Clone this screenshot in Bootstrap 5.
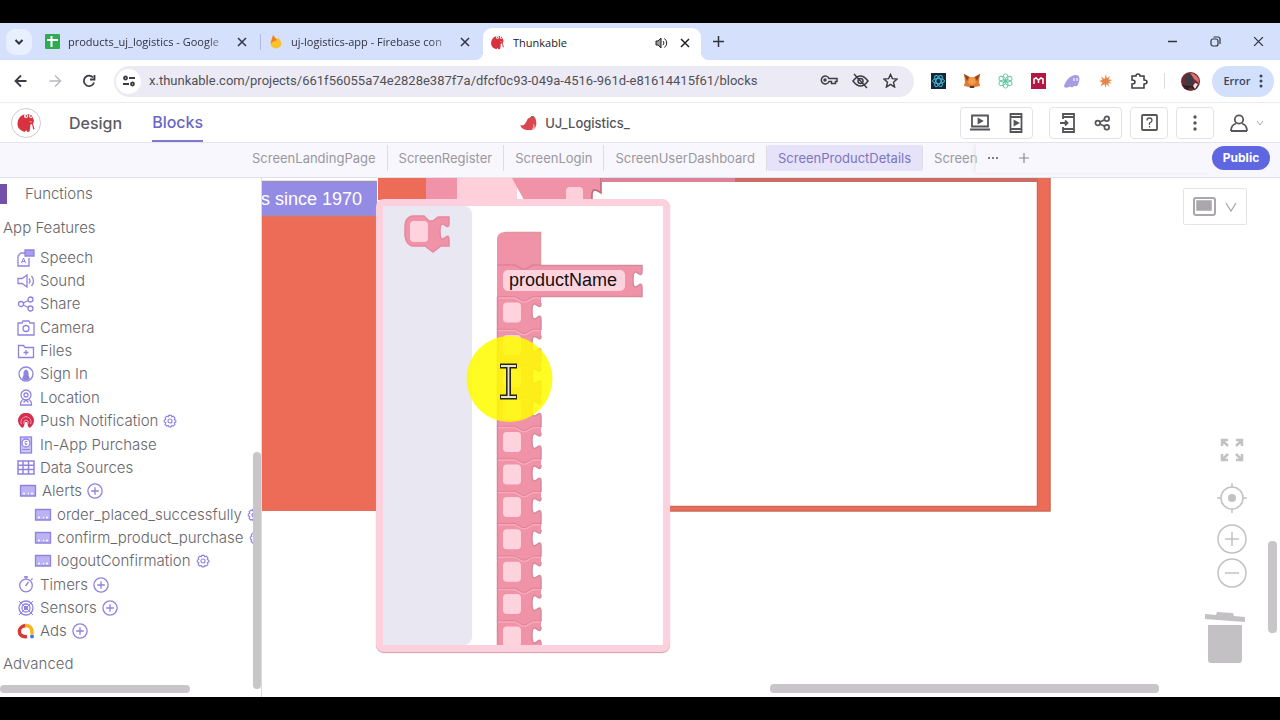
<!DOCTYPE html>
<html lang="en">
<head>
<meta charset="utf-8">
<meta name="viewport" content="width=device-width, initial-scale=1">
<title>Thunkable</title>
<link rel="stylesheet" href="https://cdn.jsdelivr.net/npm/bootstrap@5.3.0/dist/css/bootstrap.min.css">
<style>
:root{--violet:#8f83e0;--ink:#55555a}
body{font-family:Inter,"Liberation Sans",sans-serif;background:#000;padding:23px 0;overflow:hidden;fill:none;stroke:currentColor;stroke-width:1.5px}
button{background:none;border:0;padding:0;color:inherit;line-height:1}
svg{display:block;flex-shrink:0}
.tabstrip{height:37px;background:#d5e0fc;font:11px/16px "Open Sans",sans-serif;color:#303340}
.tabsearch{width:26px;height:26px;border-radius:9px;background:#e8effe;margin:0 6px}
.btab{width:222px;height:32px;padding:0 13px 0 7px}
.btab .ttl{overflow:hidden;white-space:nowrap;color:inherit;text-decoration:none}
.btab.fade-end .ttl{-webkit-mask-image:linear-gradient(90deg,#000 88%,rgba(0,0,0,.3))}
.btab.on{width:218px;padding:0 11px 3px 7px;background:#fff;border-radius:9px 9px 0 0;align-self:end;position:relative;color:#202124}
.btab.on::before,.btab.on::after{content:"";position:absolute;bottom:0;width:8px;height:8px}
.btab.on::before{left:-8px;background:radial-gradient(circle at 0 0,transparent 8px,#fff 8px)}
.btab.on::after{right:-8px;background:radial-gradient(circle at 100% 0,transparent 8px,#fff 8px)}
.wincontrols{gap:32px;padding-right:16px}
.vline{width:1px;height:16px;background:#aebbdc}
.toolbar{height:43px;background:#fff;border-bottom:1px solid #ececf0;color:#3c3d42}
.navbtns{gap:20px;padding:0 18px 0 14px}
.dim{color:#b9b9bf}
.omni{height:31px;border-radius:16px;background:#ecebf5;padding:0 16px 0 2px}
.omni input{font:13px/18px Roboto,"Open Sans",sans-serif;color:#505058;background:none;border:0;padding:0;outline:0}
.omni .acts{gap:14px}
.siteinfo{width:25px;height:25px;border-radius:50%;background:#fff}
.exts{gap:16px;padding:0 12px 0 16px}
.exts .vline{background:#dcdbe2}
.errpill{height:31px;width:62px;margin-right:6px;border-radius:16px;background:#d3e0fc;font:600 11px/16px "Open Sans",sans-serif;color:#3a4460}
.apphead{height:39px;background:#fff;color:var(--ink)}
.logo{width:30px;height:30px;border:1px solid #cfcbd2;border-radius:50%;margin-left:11px}
.modes{gap:30px;margin-left:28px}
.modes a{font-size:16px;font-weight:500;line-height:20px;color:#5c5c60;text-decoration:none;height:39px;padding-top:10px}
.modes a.on{color:#6a66c9;border-bottom:2px solid #8078cc;padding-top:9px}
.proj{font-size:13px;line-height:18px;font-weight:500;color:#55555a;margin-left:-65px}
.tools{height:32px;border:1px solid #e3e2e6;border-radius:4px}
.w-one{width:38px}.w-two{width:73px}
.screens{height:36px;padding-bottom:4px;background:#f8f7fd;border-top:1px solid #e6e5eb;border-bottom:1px solid #e3e2e8}
.scr{height:26px;padding:0 11px;border-right:1px solid #dedde4;font-size:13px;line-height:26px;color:#98989f;text-decoration:none;white-space:nowrap}
.scr.on{background:#e6e2fa;color:#7a76bf;border-radius:3px}
.scrwrap{margin-left:241px;width:735px}
.scrmore{box-shadow:-3px 0 5px -2px #e3e2ea;color:#8a8a91;height:30px;padding-left:11px}
.pub{background:#5e66e2;color:#fff;border-radius:12px;height:24px;width:58px;margin-right:10px;font-size:12px;font-weight:700}
.stage{background:#fff;min-height:0}
.side{width:262px;border-right:1px solid #dcdbe2;font-size:15px;font-weight:300;color:#66666c;stroke-width:1.3px}
.side a{color:inherit;text-decoration:none;line-height:20px}
.side .fn{height:31px;padding-left:25px}
.side .hd{height:37px;padding-left:3px}
.side .adv{height:42px}
.side .row-f{flex:1;padding-left:17px;gap:5px}
.side .grp{padding-left:19px}
.side .sub{padding-left:34px}
.side svg{color:var(--violet)}
.fnmark{left:0;top:6px;width:7px;height:20px;background:#7550a8}
.bar{background:#c8c6c9;border-radius:4px}
.sidev{right:0;bottom:8px;width:8px;height:237px}
.sideh{width:190px;height:8px}
.work{overflow:hidden}
.canvas-svg{position:absolute;left:0;top:0;stroke:none}
.pop{position:absolute;left:114px;top:21px;width:294px;height:453px;border:7px solid #fcd0dc;border-radius:8px;background:#fff;box-shadow:0 1px 1px #d998a8;overflow:hidden}
.drawer{width:89px;height:100%;background:#e9e7f2;border-radius:0 8px 8px 0}
.pop svg{stroke:none}
.fieldname{position:absolute;left:120px;top:64px;width:122px;height:21px;border:0;border-radius:5px;background:#ffd3dd;font:18px/20px "Liberation Sans",Arial,sans-serif;color:#111;padding:0 6px;outline:0}
.halo{position:absolute;left:204px;top:158px}
.picker{position:absolute;right:33px;top:10px;width:64px;height:37px;border:1px solid #e4e3e6;border-radius:2px;color:#a9a7ab}
.ctl{position:absolute;right:28px;bottom:33px;width:40px;color:#c3c1c4}
.ctl .c1{margin-top:21px}.ctl .c2{margin-top:11px}.ctl .bin{margin:22px 14px 0 0}
.vbar{right:3px;top:363px;width:9px;height:92px}
.hbar{left:508px;bottom:4px;width:389px;height:9px}
</style>
<script src="https://cdn.jsdelivr.net/npm/bootstrap@5.3.0/dist/js/bootstrap.bundle.min.js"></script>
</head>
<body class="vh-100 d-flex flex-column">
<svg width="0" height="0" class="position-absolute">
<symbol id="x" viewBox="0 0 10 10"><path d="M1 1l8 8M9 1L1 9"/></symbol>
<symbol id="gear" viewBox="0 0 16 16"><path d="M6.500 1.500h3l.6 1.700 1.800-.6 1.800 2-.8 1.600 1.700 1v2l-1.700.9.7 1.800-2 1.900-1.600-.7-1 1.600h-2l-1-1.700-1.700.7-1.900-1.900.8-1.700-1.700-1v-2l1.700-1-.7-1.700 1.900-1.900 1.600.6z"/><circle cx="8" cy="8" r="2.300"/></symbol>
<symbol id="plus" viewBox="0 0 16 16"><circle cx="8" cy="8" r="7.100"/><path d="M8 4.200v7.600M4.200 8h7.600"/></symbol>
<symbol id="alert" viewBox="0 0 18 14"><path d="M1.500 1.500h15v10.500h-15z" fill="#bcb4f2"/><path d="M4 9.500h2M9 9.500h1M12 9.500h2" stroke="#fff"/></symbol>
<symbol id="dino" viewBox="0 0 20 20"><g stroke="none"><path d="M4.500 3.500C7 1 14 .5 16.500 3l1.500 5-1 3 1.500 5-2 1-2-4-1 5.500-2.500.5-.5-2-2 2-3-1.500C.5 15 .2 8 4.500 3.500z" fill="#d8313f"/><path d="M14 12l2-1 1.500 7h-2z" fill="#fff"/><circle cx="10" cy="3" r="2" fill="#fff"/><circle cx="15" cy="3" r="2" fill="#fff"/><circle cx="10.300" cy="3" r=".8" fill="#222"/><circle cx="15" cy="3" r=".8" fill="#222"/><path d="M13 8l3 .5-1 1.500z" fill="#f5a34a"/></g></symbol>
<symbol id="share" viewBox="0 0 18 16"><circle cx="4" cy="8" r="2.500"/><circle cx="13.500" cy="3.500" r="2.500"/><circle cx="13.500" cy="12.500" r="2.500"/><path d="M6.300 7l5-2.500M6.300 9l5 2.500"/></symbol>
<symbol id="blk" viewBox="0 0 46 40" overflow="visible"><path d="M0 0H44V6c0 11-9-9-9 8.500s9-3 9 8.500V33H0z" fill="#f193a8"/><path d="M44 6c0 11-9-9-9 8.500s9-3 9 8.500V33M.5 33V0" fill="none" stroke="#d58a9c"/><path d="M0 0H18l7 4h4l7-4h8" stroke="#dc8297" fill="none"/><path d="M1 1H18l7 4h4l7-4h7" stroke="#f7a9ba" fill="none"/><rect x="6" y="5.500" width="18" height="20" rx="4" fill="#ffd3dd"/></symbol>
</svg>

<header>
<div class="tabstrip d-flex align-items-center">
 <button class="tabsearch d-flex align-items-center justify-content-center" aria-label="Search tabs"><svg width="10" height="10" viewBox="0 0 10 10" stroke-width="2"><path d="M1.500 3L5 6.500 8.500 3"/></svg></button>
 <div class="btab fade-end d-flex align-items-center gap-2"><svg width="15" height="15" viewBox="0 0 15 15"><rect width="15" height="15" rx="1" fill="#2fab50" stroke="none"/><path d="M2 6h11M6.500 2v11" stroke="#fff" stroke-width="2"/></svg><a href="#" class="ttl flex-grow-1">products_uj_logistics - Google</a><button class="ms-1" aria-label="Close"><svg width="10" height="10"><use href="#x"/></svg></button></div>
 <div class="vline"></div>
 <div class="btab fade-end d-flex align-items-center gap-2"><svg width="15" height="15" viewBox="0 0 15 15" stroke="none"><ellipse cx="8" cy="9.500" rx="5.500" ry="5" fill="#fdc02f"/><path d="M9 5l2-1 2 5z" fill="#fdc02f"/><path d="M2.500 9L5 1l4 5z" fill="#f2801e"/></svg><a href="#" class="ttl flex-grow-1">uj-logistics-app - Firebase con</a><button class="ms-1" aria-label="Close"><svg width="10" height="10"><use href="#x"/></svg></button></div>
 <div class="btab on d-flex align-items-center gap-2"><svg width="15" height="15"><use href="#dino"/></svg><a href="#" class="ttl flex-grow-1">Thunkable</a><button aria-label="Mute tab"><svg width="13" height="12" viewBox="0 0 13 12" stroke-width="1"><path d="M1 4h2l3-3v10L3 8H1z" fill="#999"/><path d="M8 4q2 2 0 4M9.500 1.500q4.500 4.500 0 9"/></svg></button><button class="ms-1" aria-label="Close"><svg width="10" height="10"><use href="#x"/></svg></button></div>
 <button class="ms-1 px-2" aria-label="New tab"><svg width="11" height="11" viewBox="0 0 11 11"><path d="M5.500 0v11M0 5.500h11"/></svg></button>
 <div class="wincontrols ms-auto d-flex align-items-center"><button aria-label="Minimise"><svg width="11" height="11" viewBox="0 0 11 11"><path d="M1 5.500h9"/></svg></button><button aria-label="Restore"><svg width="11" height="11" viewBox="0 0 11 11" stroke-width="1.200"><rect x="1" y="3" width="7" height="7" rx="2"/><path d="M3.500 1H8q2 0 2 2v5"/></svg></button><button aria-label="Close window"><svg width="11" height="11" stroke-width="1.200"><use href="#x"/></svg></button></div>
</div>
<div class="toolbar d-flex align-items-center">
 <div class="navbtns d-flex"><button aria-label="Back"><svg width="14" height="14" viewBox="0 0 14 14" stroke-width="1.800"><path d="M12.500 7h-11M7 1.500L1.500 7 7 12.500"/></svg></button><button class="dim" aria-label="Forward"><svg width="14" height="14" viewBox="0 0 14 14"><path d="M1.500 7h11M7 1.500L12.500 7 7 12.500"/></svg></button><button aria-label="Reload"><svg width="14" height="14" viewBox="0 0 14 14" stroke-width="1.800"><path d="M12 8.500A5.200 5.200 0 1 1 11 3.500M12.500 1v4.500H8"/></svg></button></div>
 <div class="omni d-flex align-items-center flex-grow-1">
  <button class="siteinfo d-flex align-items-center justify-content-center" aria-label="Site information"><svg width="12" height="12" viewBox="0 0 12 12" stroke-width="1.800"><circle cx="2.500" cy="3" r="1.500"/><path d="M6 3h6M0 9h6"/><circle cx="9.500" cy="9" r="1.500"/></svg></button>
  <input class="flex-grow-1 ms-2" aria-label="Address" value="x.thunkable.com/projects/661f56055a74e2828e387f7a/dfcf0c93-049a-4516-961d-e81614415f61/blocks">
  <div class="acts d-flex"><svg width="18" height="14" viewBox="0 0 18 14"><path d="M9 5.500A4 4 0 1 0 9 8.500h2.500v2h4v-2H17v-3z"/><circle cx="5" cy="7" r="1"/></svg><svg width="17" height="16" viewBox="0 0 17 16"><path d="M1 8q7.500-10 15 0-7.500 10-15 0zM2 1l13 14"/><circle cx="8.500" cy="8" r="2.500"/></svg><svg width="15" height="15" viewBox="0 0 16 16"><path d="M8 1.500l2 4.500 5 .5-3.800 3.300L12.400 15 8 12.200 3.600 15l1.200-5.200L1 6.500 6 6z"/></svg></div>
 </div>
 <div class="exts d-flex align-items-center">
  <svg width="17" height="16" viewBox="0 0 17 16"><rect x="1" width="15" height="16" fill="#14283a" stroke="none"/><g stroke="#43b9d8" stroke-width="1"><ellipse cx="8.500" cy="8" rx="6" ry="2.500"/><ellipse cx="8.500" cy="8" rx="6" ry="2.500" transform="rotate(60 8.500 8)"/><ellipse cx="8.500" cy="8" rx="6" ry="2.500" transform="rotate(120 8.500 8)"/></g></svg>
  <svg width="18" height="16" viewBox="0 0 18 16" stroke="none"><path d="M1 1l6 3h4l6-3-1 8 1 4-5 1-1 1H7l-1-1-5-1 1-4z" fill="#df7a32"/><path d="M7 4h4l2 6-4 2-4-2z" fill="#f49a4c"/><path d="M1 1l5 3-2 4zM17 1l-5 3 2 4z" fill="#8f4520"/><path d="M7 13h4v2H7z" fill="#493c3c"/></svg>
  <svg width="17" height="16" viewBox="0 0 17 16" color="#56c5a2" stroke-width=".9"><g id="petal"><ellipse cx="8.500" cy="4.500" rx="2.500" ry="3.700"/><ellipse cx="8.500" cy="11.500" rx="2.500" ry="3.700"/></g><use href="#petal" transform="rotate(60 8.500 8)"/><use href="#petal" transform="rotate(120 8.500 8)"/></svg>
  <svg width="17" height="16" viewBox="0 0 17 16"><rect x="1" width="15" height="16" fill="#b31845" stroke="none"/><path d="M4 11V6l2-1 2.500 2L11 5l2 1v5M8.500 7v3" stroke="#fff"/></svg>
  <svg width="18" height="16" viewBox="0 0 18 16" stroke="none"><path d="M1 13C3 7 7 2 13 2c5 0 4 7 1 11-2 1-2-1-4 1-2 1-2-1-4 0-2 1-5 1-5-1z" fill="#a79be2"/><path d="M11 5v3M14 5v3" stroke="#e9e4ff"/></svg>
  <svg width="17" height="16" viewBox="0 0 17 16" stroke="none"><path d="M9 1l.8 4.500L13 3l-1.500 3.500 4 .5-3.500 1.500 3 2-4-.5 1.500 4-3-3-1 4-1-4-4 2.500 2-4L2 8l3.500-1L4 3.500 7.500 6z" fill="#e8864a"/></svg>
  <svg width="18" height="17" viewBox="0 0 18 17"><path d="M2 3h4q0-2 2-2t2 2h4v4q3 0 3 2t-3 2v4H2v-4q3 0 3-2T2 7z"/></svg>
  <div class="vline"></div>
  <svg width="19" height="19" viewBox="0 0 19 19" stroke="none"><circle cx="9.500" cy="9.500" r="9.500" fill="#6d2b33"/><path d="M9 1a9 9 0 0 1 9 10l-5-4z" fill="#dd6f6c"/><ellipse cx="8" cy="8" rx="4" ry="6" fill="#3b3b44"/><path d="M1 13l5 5 4-3 4 3 3-5-7 1z" fill="#2b2025"/><path d="M12 14l2-3 3 1-3 5z" fill="#e7e5ed"/></svg>
 </div>
 <button class="errpill d-flex align-items-center justify-content-center gap-2 flex-shrink-0">Error <svg width="4" height="14" viewBox="0 0 4 14" fill="currentColor" stroke="none"><circle cx="2" cy="2" r="1.500"/><circle cx="2" cy="7" r="1.500"/><circle cx="2" cy="12" r="1.500"/></svg></button>
</div>
<div class="apphead d-flex align-items-center position-relative">
 <div class="logo d-flex align-items-center justify-content-center"><svg width="20" height="20"><use href="#dino"/></svg></div>
 <nav class="modes d-flex"><a href="#">Design</a><a href="#" class="on">Blocks</a></nav>
 <div class="proj position-absolute start-50 translate-middle-x d-flex align-items-center gap-2"><svg width="17" height="15" viewBox="0 0 18 16" stroke="none"><path d="M0 11c5 1 6-3 8-7l5-3 3 2c2 5 2 12-4 13C6 17 1 15 0 11z" fill="#dc4650"/><path d="M11 1l2 3 2-3z" fill="#7e7650"/><path d="M14 10q2 3-1 5" stroke="#f2adab"/></svg><span>UJ_Logistics_</span></div>
 <div class="ms-auto d-flex align-items-center gap-2 pe-3">
  <div class="tools w-two d-flex align-items-center justify-content-around me-2"><button aria-label="Web preview"><svg width="20" height="17" viewBox="0 0 20 17" stroke-width="1.800"><path d="M2 1.500h16v11H2zM0 15.500h20"/><path d="M8.500 5v4l3.500-2z" fill="currentColor"/></svg></button><button aria-label="Mobile preview"><svg width="14" height="20" viewBox="0 0 14 20" stroke-width="1.800"><path d="M1.500 1h11v18h-11zM1.500 4h11M1.500 16h11"/><path d="M5.500 8v4l3.500-2z" fill="currentColor"/></svg></button></div>
  <div class="tools w-two d-flex align-items-center justify-content-around"><button aria-label="Download"><svg width="15" height="20" viewBox="0 0 15 20" stroke-width="1.800"><path d="M3 6V1h11v18H3v-5M3 4h11M3 16h11M0 10h7M5 7.500L7.500 10 5 12.500"/></svg></button><button aria-label="Share"><svg width="17" height="16" stroke-width="1.800"><use href="#share"/></svg></button></div>
  <button class="tools w-one d-flex align-items-center justify-content-center" aria-label="Help"><svg width="17" height="17" viewBox="0 0 17 17" stroke-width="1.800"><rect x="1" y="1" width="15" height="15" rx="1"/><path d="M6 6.500q0-2.500 2.500-2.500T11 6.500Q11 8 8.500 9v2M8.500 12v1.500" stroke-width="1.300"/></svg></button>
  <button class="tools w-one d-flex align-items-center justify-content-center" aria-label="More"><svg width="4" height="16" viewBox="0 0 4 16" fill="currentColor" stroke="none"><circle cx="2" cy="2" r="1.700"/><circle cx="2" cy="8" r="1.700"/><circle cx="2" cy="14" r="1.700"/></svg></button>
  <button class="d-flex align-items-center gap-2 ms-2" aria-label="Account"><svg width="18" height="18" viewBox="0 0 18 18" stroke-width="1.800"><circle cx="9" cy="5.500" r="4.200"/><path d="M1 17q0-6 5-7.500M17 17q0-6-5-7.500M1 17h16"/></svg><svg width="8" height="6" viewBox="0 0 8 6" color="#aaa" stroke-width="1"><path d="M1 1l3 4 3-4"/></svg></button>
 </div>
</div>
<div class="screens d-flex align-items-center">
 <nav class="scrwrap d-flex flex-shrink-0"><a class="scr" href="#">ScreenLandingPage</a><a class="scr" href="#">ScreenRegister</a><a class="scr" href="#">ScreenLogin</a><a class="scr" href="#">ScreenUserDashboard</a><a class="scr on" href="#">ScreenProductDetails</a><a class="scr border-0 pe-0" href="#">Screen</a></nav>
 <div class="scrmore d-flex align-items-center flex-grow-1"><button class="me-3" aria-label="All screens"><svg width="12" height="4" viewBox="0 0 12 4" fill="#55555c" stroke="none"><circle cx="2" cy="2" r="1"/><circle cx="6" cy="2" r="1"/><circle cx="10" cy="2" r="1"/></svg></button><button class="ms-1" aria-label="Add screen"><svg width="10" height="10" viewBox="0 0 10 10" stroke-width="1.200"><path d="M5 0v10M0 5h10"/></svg></button></div>
 <button class="pub flex-shrink-0">Public</button>
</div>
</header>

<main class="stage d-flex flex-grow-1">
<aside class="side d-flex flex-column position-relative flex-shrink-0 overflow-hidden">
 <div class="fn d-flex align-items-center position-relative"><span class="fnmark position-absolute"></span><a href="#">Functions</a></div>
 <div class="hd d-flex align-items-center"><a href="#">App Features</a></div>
 <div class="d-flex flex-column flex-grow-1">
  <div class="row-f d-flex align-items-center"><svg width="18" height="18" viewBox="0 0 18 18"><path d="M8 4H4L1 7v10h11V9"/><path d="M8 1h9v6H8z" fill="#a79cf0"/><path d="M4.500 14l2-5 2 5M5 12.500h3" stroke-width="1"/></svg><a href="#">Speech</a></div>
  <div class="row-f d-flex align-items-center"><svg width="18" height="16" viewBox="0 0 18 16"><path d="M1 5.500h4L10 2v12l-5-3.500H1zM12 5.500q2 2.500 0 5M14.500 3q4 5 0 10"/></svg><a href="#">Sound</a></div>
  <div class="row-f d-flex align-items-center"><svg width="18" height="16"><use href="#share"/></svg><a href="#">Share</a></div>
  <div class="row-f d-flex align-items-center"><svg width="18" height="16" viewBox="0 0 18 16"><path d="M1 3h4l1-2h6l1 2h4v12H1z"/><circle cx="9" cy="8.500" r="3"/></svg><a href="#">Camera</a></div>
  <div class="row-f d-flex align-items-center"><svg width="18" height="15" viewBox="0 0 18 15"><path d="M1.500 13.500V1.500h5l1.500 2h8.500v10zM9 6v5M6.500 8.500h5"/></svg><a href="#">Files</a></div>
  <div class="row-f d-flex align-items-center"><svg width="18" height="16" viewBox="0 0 18 16"><circle cx="9" cy="8" r="7"/><path d="M5 13l1.500-4V6q2.500-5 5 0v3l1.500 4q-4 2.500-8 0z" fill="#8f83e0" stroke="none"/></svg><a href="#">Sign In</a></div>
  <div class="row-f d-flex align-items-center"><svg width="18" height="17" viewBox="0 0 18 17"><circle cx="9" cy="6" r="5"/><circle cx="9" cy="6" r="2"/><path d="M6.500 10.500q-3 1-3 5.500h11q0-4.500-3-5.500M6.500 13.500L9 11l2.500 2.500"/></svg><a href="#">Location</a></div>
  <div class="row-f d-flex align-items-center"><svg width="18" height="16" viewBox="0 0 18 16"><path d="M4 14a8 8 0 1 1 10 0q-2 2-3-1l-1-4H8l-1 4q-1 3-3 1z" fill="#d52d50" stroke="none"/><path d="M4.500 11a5 5 0 1 1 9 0M7 11V8q2-2 4 0v3" stroke="#ff9ead" stroke-width="1"/></svg><a href="#">Push Notification</a><button aria-label="Settings"><svg width="14" height="14"><use href="#gear"/></svg></button></div>
  <div class="row-f d-flex align-items-center"><svg width="18" height="18" viewBox="0 0 18 18"><rect x="3.500" y="1" width="11" height="16" fill="#cfc8f7"/><circle cx="9" cy="7" r="4" fill="#fff"/><path d="M10.500 5.500q-3-1-2.500 1t2 1.500-2 1M5 13.500h8" stroke-width="1"/></svg><a href="#">In-App Purchase</a></div>
  <div class="row-f d-flex align-items-center"><svg width="18" height="15" viewBox="0 0 18 15"><path d="M1 1h16v13H1zM1 5.300h16M1 9.600h16M6 1v13M11.500 1v13" stroke-width="1.500"/></svg><a href="#">Data Sources</a></div>
  <div class="row-f grp d-flex align-items-center"><svg width="18" height="14"><use href="#alert"/></svg><a href="#">Alerts</a><button aria-label="Add alert"><svg width="16" height="16"><use href="#plus"/></svg></button></div>
  <div class="row-f sub d-flex align-items-center"><svg width="18" height="14"><use href="#alert"/></svg><a href="#">order_placed_successfully</a><button aria-label="Settings"><svg width="14" height="14"><use href="#gear"/></svg></button></div>
  <div class="row-f sub d-flex align-items-center"><svg width="18" height="14"><use href="#alert"/></svg><a href="#">confirm_product_purchase</a><button aria-label="Settings"><svg width="14" height="14"><use href="#gear"/></svg></button></div>
  <div class="row-f sub d-flex align-items-center"><svg width="18" height="14"><use href="#alert"/></svg><a href="#">logoutConfirmation</a><button aria-label="Settings"><svg width="14" height="14"><use href="#gear"/></svg></button></div>
  <div class="row-f d-flex align-items-center"><svg width="18" height="17" viewBox="0 0 18 17"><circle cx="9" cy="9.500" r="6.300"/><path d="M9 3V0M7 1h4M8.500 10l3-4M14 4l1.500-1.500"/></svg><a href="#">Timers</a><button aria-label="Add timer"><svg width="16" height="16"><use href="#plus"/></svg></button></div>
  <div class="row-f d-flex align-items-center"><svg width="18" height="16" viewBox="0 0 18 16"><circle cx="9" cy="8" r="7"/><circle cx="9" cy="8" r="4"/><path d="M2 1l14 14M16 1L2 15" stroke-width="1"/><circle cx="9" cy="8" r="1.500"/></svg><a href="#">Sensors</a><button aria-label="Add sensor"><svg width="16" height="16"><use href="#plus"/></svg></button></div>
  <div class="row-f d-flex align-items-center"><svg width="18" height="16" viewBox="0 0 18 16" stroke-width="3.500"><path d="M10 13.500C0 15 0 3 9 2.500" stroke="#d63a34"/><path d="M8 2.500q7-.5 7 7v2" stroke="#f3b71d"/><circle cx="15" cy="13.500" r="2" fill="#3f7bd9" stroke="none"/></svg><a href="#">Ads</a><button aria-label="Add ad"><svg width="16" height="16"><use href="#plus"/></svg></button></div>
 </div>
 <div class="hd adv d-flex align-items-center"><a href="#">Advanced</a></div>
 <div class="bar sideh mb-1"></div>
 <div class="bar sidev position-absolute"></div>
</aside>

<section class="work flex-grow-1 position-relative">
 <svg class="canvas-svg" width="800" height="340" viewBox="0 0 800 340">
  <path d="M0 36H115V333H0zM116 0H164V22H116z" fill="#ec6c58"/>
  <path d="M0 4H115V37H0z" fill="#948be4"/><path d="M0 3.500H115M0 37.500H115" stroke="#a08fb4" fill="none"/>
  <path d="M164 0H195V22H164z" fill="#f193a8"/><path d="M195 0H255V22H195z" fill="#ffd0da"/>
  <path d="M250 0H339V15q-9-7-9 2v5H262z" fill="#f193a8"/><path d="M339 0V15q-9-7-9 2v5" stroke="#b9667b" fill="none"/><rect x="304" y="9" width="17" height="15" rx="4" fill="#ffd0da"/>
  <path d="M339 0H473V4H339z" fill="#d9829a"/><path d="M473 0H776V4H473z" fill="#c96d62"/>
  <path d="M776 0H788V333H408V329H776z" fill="#ec6c58"/><path d="M775.500 4V328.500H408M788 0V333H408" stroke="#c96b58" fill="none"/>
  <text x="-1" y="27" fill="#fff" font-family="Liberation Sans, Arial, sans-serif" font-size="18">s since 1970</text>
 </svg>
 <div class="pop">
  <div class="drawer"></div>
  <svg class="position-absolute start-0 top-0" width="280" height="439" viewBox="0 0 280 439">
   <g transform="translate(21 9)"><path d="M8 1h12l5 5h4l5-4h11v6c0 11-9-9-9 8.500s9-3 9 8.500v6H37l-8 6-8-6H8q-6-2-7-10V11q0-8 7-10z" fill="#f193a8" stroke="#e5899f"/><rect x="6" y="6" width="18" height="21" rx="4" fill="#ffd3dd"/></g>
   <path d="M114 60V34q0-8 8-8H158V60z" fill="#f193a8"/><path d="M122 26.500H157.500V59" stroke="#d99" fill="none"/>
   <path d="M114 59H259V65c0 11-9-9-9 8.500s9-3 9 8.500V91H114z" fill="#f193a8"/><path d="M158 59.500H259V65c0 11-9-9-9 8.500s9-3 9 8.500V90.500H158" stroke="#d58a9c" fill="none"/><path d="M114 59H132l7 4h4l7-4h8" stroke="#dc8297" fill="none"/>
   <g id="blocks"></g>
  </svg>
  <input class="fieldname" value="productName" aria-label="Property name">
 </div>
 <svg class="halo" width="88" height="90" viewBox="0 0 88 90" stroke="none"><circle cx="43.500" cy="43" r="43" fill="#fffb00" opacity=".86"/><path d="M34 30h17M34 61h17M42.500 30v31" stroke="#2b2810" stroke-width="5"/><path d="M35 30h15M35 61h15M42.500 30v31" stroke="#e9e5d2" stroke-width="1.800"/></svg>
 <button class="picker d-flex align-items-center justify-content-center gap-2" aria-label="Device"><svg width="24" height="19" viewBox="0 0 24 19"><rect x="1" y="1" width="21" height="17" rx="2" stroke-width="2"/><path d="M4 4h14v9H4z" fill="currentColor"/></svg><svg width="12" height="10" viewBox="0 0 12 10" stroke-width="1.300"><path d="M1 1l5 8 5-8"/></svg></button>
 <div class="ctl d-flex flex-column align-items-center">
  <button aria-label="Full screen"><svg width="24" height="24" viewBox="0 0 24 24" stroke-width="2.500"><path d="M2 8V2h6M2 2l6 6M16 2h6v6M22 2l-6 6M2 16v6h6M2 22l6-6M16 22h6v-6M22 22l-6-6"/></svg></button>
  <button class="c1" aria-label="Centre"><svg width="30" height="30" viewBox="0 0 30 30"><circle cx="15" cy="15" r="11"/><circle cx="15" cy="15" r="4" fill="currentColor" stroke="none"/><path d="M15 0v4M15 26v4M0 15h4M26 15h4"/></svg></button>
  <button class="c2" aria-label="Zoom in"><svg width="30" height="30" viewBox="0 0 30 30"><circle cx="15" cy="15" r="14"/><path d="M15 8v14M8 15h14"/></svg></button>
  <button class="mt-1" aria-label="Zoom out"><svg width="30" height="30" viewBox="0 0 30 30"><circle cx="15" cy="15" r="14"/><path d="M8 15h14"/></svg></button>
  <button class="bin" aria-label="Delete"><svg width="40" height="54" viewBox="0 0 40 54" fill="currentColor" stroke="none"><path d="M0 4l11 1 1-3 16 1 1 3 11 1v5L0 9zM3 15h34v35q0 3-3 3H6q-3 0-3-3z"/></svg></button>
 </div>
 <div class="bar vbar position-absolute"></div><div class="bar hbar position-absolute"></div>
</section>
</main>
<script>
// Stack one property block below another, from the first empty one to the bottom edge of the popover.
let rows = "";
for (let i = 0; i < 11; i++) rows += `<use href="#blk" x="114" y="${91 + i * 32.4}" width="46" height="40"/>`;
document.getElementById("blocks").innerHTML = rows;
</script>
</body>
</html>
